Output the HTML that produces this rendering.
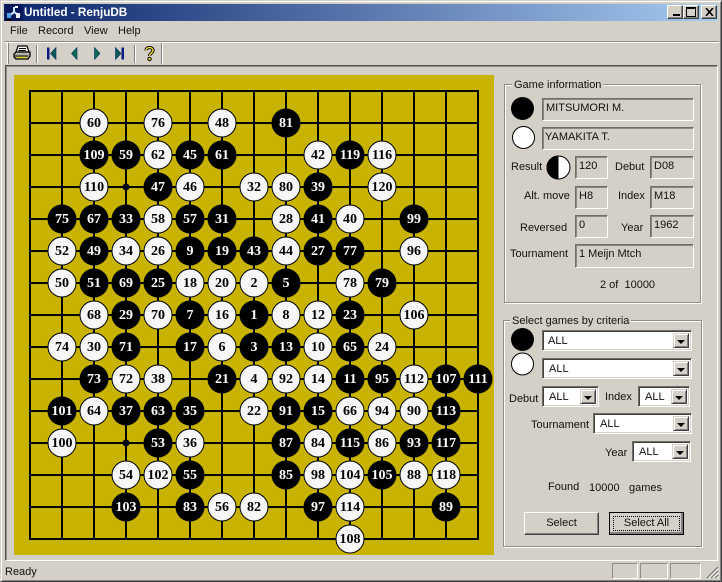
<!DOCTYPE html>
<html><head><meta charset="utf-8"><title>RenjuDB</title>
<style>
html,body{margin:0;padding:0;background:#d4d0c8;}
#w{position:relative;width:722px;height:582px;overflow:hidden;background:#d4d0c8;font:11px "Liberation Sans",sans-serif;color:#000;}
.a{position:absolute;box-sizing:border-box;}
.t{position:absolute;white-space:nowrap;line-height:14px;color:#111;}
.f{position:absolute;box-sizing:border-box;border:1px solid;border-color:#716f64 #fff #fff #716f64;box-shadow:inset 1px 1px 0 #8a887f;padding:2px 0 0 3px;line-height:14px;white-space:nowrap;color:#111;}
.g{position:absolute;box-sizing:border-box;border:1px solid #8f8d85;box-shadow:1px 1px 0 #fff,inset 1px 1px 0 #fff;}
.gl{position:absolute;background:#d4d0c8;padding:0 2px;line-height:13px;white-space:nowrap;color:#111;}
.c{position:absolute;box-sizing:border-box;background:#fff;border:1px solid;border-color:#716f64 #fff #fff #716f64;box-shadow:inset 1px 1px 0 #404040,inset -1px -1px 0 #d4d0c8;line-height:14px;padding:3px 0 0 5px;color:#111;}
.c i{position:absolute;top:2px;right:2px;bottom:2px;width:16px;background:#d4d0c8;border:1px solid;border-color:#d4d0c8 #404040 #404040 #d4d0c8;box-shadow:inset 1px 1px 0 #fff,inset -1px -1px 0 #808080;box-sizing:border-box;}
.c i:after{content:"";position:absolute;left:3px;top:6px;border:4px solid transparent;border-top:4px solid #000;border-bottom:0;}
.b{position:absolute;box-sizing:border-box;background:#d4d0c8;text-align:center;line-height:21px;color:#111;border:1px solid;border-color:#fff #404040 #404040 #fff;box-shadow:inset -1px -1px 0 #808080;}
.wb{position:absolute;top:5px;width:16px;height:14px;box-sizing:border-box;background:#d4d0c8;border:1px solid;border-color:#fff #404040 #404040 #fff;box-shadow:inset -1px -1px 0 #808080;}
.p{position:absolute;top:563px;height:16px;box-sizing:border-box;border:1px solid;border-color:#8f8d85 #fff #fff #8f8d85;}
#bd circle.k{fill:#000;}
#bd circle.o{fill:#f6f6f6;stroke:#000;stroke-width:1;}
#bd text{font:bold 14px "Liberation Serif",serif;text-anchor:middle;}
#bd text.n{fill:#fff;}
#bd text.m{fill:#000;}
</style></head><body>
<div id="w">
<!-- window edges -->
<div class="a" style="left:0;top:0;width:722px;height:582px;border:1px solid;border-color:#d4d0c8 #404040 #404040 #d4d0c8;box-shadow:inset 1px 1px 0 #fff,inset -1px -1px 0 #808080;"></div>
<!-- title -->
<div class="a" style="left:4px;top:4px;width:714px;height:17px;background:linear-gradient(90deg,#0a246a,#a6caf0);"></div>
<svg class="a" style="left:5px;top:4px" width="18" height="17" viewBox="0 0 18 17"><rect width="18" height="17" fill="#06175a"/><path d="M9 3 L9 8 M3 13 L9 8 L15 12" stroke="#cfe4ff" stroke-width="2" fill="none"/><rect x="10" y="2" width="3" height="2" fill="#fff"/><rect x="2" y="9" width="4" height="5" fill="#4aa0e0"/><rect x="11" y="9" width="4" height="5" fill="#e8f2ff"/><rect x="1" y="15" width="5" height="2" fill="#000"/></svg>
<div class="t" style="left:24px;top:5px;color:#fff;font:bold 11.700px/15px 'Liberation Sans',sans-serif;">Untitled - RenjuDB</div>
<div class="wb" style="left:667px"><div class="a" style="left:5px;top:8px;width:7px;height:2px;background:#000"></div></div>
<div class="wb" style="left:683px"><div class="a" style="left:2px;top:1px;width:10px;height:10px;border:1px solid #000;border-top-width:2px"></div></div>
<div class="wb" style="left:701px"><svg class="a" style="left:3px;top:2px" width="9" height="8" viewBox="0 0 9 8"><path d="M1 0 L8 8 M8 0 L1 8" stroke="#000" stroke-width="1.700"/></svg></div>
<!-- menu -->
<div class="t" style="left:10px;top:24px">File</div>
<div class="t" style="left:38px;top:24px">Record</div>
<div class="t" style="left:84px;top:24px">View</div>
<div class="t" style="left:118px;top:24px">Help</div>
<div class="a" style="left:4px;top:41px;width:715px;height:2px;background:linear-gradient(#8f8d85 50%,#fff 50%);"></div>
<!-- toolbar -->
<div class="a" style="left:7px;top:43px;width:2px;height:21px;background:#fff;border-right:1px solid #808080"></div>
<div class="a" style="left:36px;top:45px;width:2px;height:18px;background:linear-gradient(90deg,#808080 50%,#fff 50%)"></div>
<div class="a" style="left:134px;top:45px;width:2px;height:18px;background:linear-gradient(90deg,#808080 50%,#fff 50%)"></div>
<div class="a" style="left:161px;top:43px;width:2px;height:21px;background:linear-gradient(90deg,#808080 50%,#fff 50%)"></div>
<svg class="a" style="left:12px;top:44px" width="20" height="18" viewBox="0 0 20 18"><path d="M6 2 H15 L17 8 H4 Z" fill="#fff" stroke="#000" stroke-width="1.200"/><path d="M7 4.500 H14 M6.500 6.500 H14" stroke="#000"/><path d="M4 8 H18 V12 L16 15 H4 L2 13 V10 Z" fill="#b5b2a8" stroke="#000" stroke-width="1.300"/><path d="M3 12 H16" stroke="#000"/><path d="M5 13.500 H15" stroke="#d8d020" stroke-width="1.500"/></svg>
<svg class="a" style="left:45px;top:46px" width="85" height="16" viewBox="0 0 85 16"><rect x="2" y="1.500" width="2.500" height="12" fill="#0a1a80"/><path d="M11 1.500 V13.500 L5.500 7.500 Z" fill="#0a5a50" stroke="#06306a" stroke-width=".6"/><path d="M32 1.500 V13.500 L26.500 7.500 Z" fill="#0a6a50" stroke="#06306a" stroke-width=".6"/><path d="M49.500 1.500 V13.500 L55 7.500 Z" fill="#0a6a50" stroke="#06306a" stroke-width=".6"/><path d="M70.500 1.500 V13.500 L76 7.500 Z" fill="#0a5a50" stroke="#06306a" stroke-width=".6"/><rect x="76.500" y="1.500" width="2.500" height="12" fill="#0a1a80"/></svg>
<svg class="a" style="left:144px;top:46px" width="11" height="16" viewBox="0 0 11 16"><path d="M2 4.500 C2 0.500 9 0.500 9 4.500 C9 7 5.500 7 5.500 10" fill="none" stroke="#000" stroke-width="3.200"/><path d="M2 4.500 C2 0.500 9 0.500 9 4.500 C9 7 5.500 7 5.500 10" fill="none" stroke="#f0e030" stroke-width="1.400"/><circle cx="5.500" cy="13" r="1.700" fill="#f0e030" stroke="#000"/></svg>
<!-- view frame -->
<div class="a" style="left:5px;top:65px;width:713px;height:496px;border:1px solid;border-color:#55534c #fff #fff #55534c;box-shadow:inset 1px 1px 0 #8f8d85;"></div>
<!-- board -->
<svg id="bd" class="a" style="left:14px;top:75px" width="480" height="480" viewBox="14 75 480 480">
<rect x="14" y="75" width="480" height="480" fill="#c8b400"/>
<path d="M30 91H478M30 123H478M30 155H478M30 187H478M30 219H478M30 251H478M30 283H478M30 315H478M30 347H478M30 379H478M30 411H478M30 443H478M30 475H478M30 507H478M30 539H478M30 91V539M62 91V539M94 91V539M126 91V539M158 91V539M190 91V539M222 91V539M254 91V539M286 91V539M318 91V539M350 91V539M382 91V539M414 91V539M446 91V539M478 91V539" stroke="#000" stroke-width="2" fill="none" stroke-linecap="square"/>
<circle cx="126" cy="187" r="3.500" fill="#000"/><circle cx="126" cy="443" r="3.500" fill="#000"/>
<circle class="o" cx="94" cy="123" r="14"/><text class="m" x="94" y="127">60</text>
<circle class="o" cx="158" cy="123" r="14"/><text class="m" x="158" y="127">76</text>
<circle class="o" cx="222" cy="123" r="14"/><text class="m" x="222" y="127">48</text>
<circle class="k" cx="286" cy="123" r="14.500"/><text class="n" x="286" y="127">81</text>
<circle class="k" cx="94" cy="155" r="14.500"/><text class="n" x="94" y="159">109</text>
<circle class="k" cx="126" cy="155" r="14.500"/><text class="n" x="126" y="159">59</text>
<circle class="o" cx="158" cy="155" r="14"/><text class="m" x="158" y="159">62</text>
<circle class="k" cx="190" cy="155" r="14.500"/><text class="n" x="190" y="159">45</text>
<circle class="k" cx="222" cy="155" r="14.500"/><text class="n" x="222" y="159">61</text>
<circle class="o" cx="318" cy="155" r="14"/><text class="m" x="318" y="159">42</text>
<circle class="k" cx="350" cy="155" r="14.500"/><text class="n" x="350" y="159">119</text>
<circle class="o" cx="382" cy="155" r="14"/><text class="m" x="382" y="159">116</text>
<circle class="o" cx="94" cy="187" r="14"/><text class="m" x="94" y="191">110</text>
<circle class="k" cx="158" cy="187" r="14.500"/><text class="n" x="158" y="191">47</text>
<circle class="o" cx="190" cy="187" r="14"/><text class="m" x="190" y="191">46</text>
<circle class="o" cx="254" cy="187" r="14"/><text class="m" x="254" y="191">32</text>
<circle class="o" cx="286" cy="187" r="14"/><text class="m" x="286" y="191">80</text>
<circle class="k" cx="318" cy="187" r="14.500"/><text class="n" x="318" y="191">39</text>
<circle class="o" cx="382" cy="187" r="14"/><text class="m" x="382" y="191">120</text>
<circle class="k" cx="62" cy="219" r="14.500"/><text class="n" x="62" y="223">75</text>
<circle class="k" cx="94" cy="219" r="14.500"/><text class="n" x="94" y="223">67</text>
<circle class="k" cx="126" cy="219" r="14.500"/><text class="n" x="126" y="223">33</text>
<circle class="o" cx="158" cy="219" r="14"/><text class="m" x="158" y="223">58</text>
<circle class="k" cx="190" cy="219" r="14.500"/><text class="n" x="190" y="223">57</text>
<circle class="k" cx="222" cy="219" r="14.500"/><text class="n" x="222" y="223">31</text>
<circle class="o" cx="286" cy="219" r="14"/><text class="m" x="286" y="223">28</text>
<circle class="k" cx="318" cy="219" r="14.500"/><text class="n" x="318" y="223">41</text>
<circle class="o" cx="350" cy="219" r="14"/><text class="m" x="350" y="223">40</text>
<circle class="k" cx="414" cy="219" r="14.500"/><text class="n" x="414" y="223">99</text>
<circle class="o" cx="62" cy="251" r="14"/><text class="m" x="62" y="255">52</text>
<circle class="k" cx="94" cy="251" r="14.500"/><text class="n" x="94" y="255">49</text>
<circle class="o" cx="126" cy="251" r="14"/><text class="m" x="126" y="255">34</text>
<circle class="o" cx="158" cy="251" r="14"/><text class="m" x="158" y="255">26</text>
<circle class="k" cx="190" cy="251" r="14.500"/><text class="n" x="190" y="255">9</text>
<circle class="k" cx="222" cy="251" r="14.500"/><text class="n" x="222" y="255">19</text>
<circle class="k" cx="254" cy="251" r="14.500"/><text class="n" x="254" y="255">43</text>
<circle class="o" cx="286" cy="251" r="14"/><text class="m" x="286" y="255">44</text>
<circle class="k" cx="318" cy="251" r="14.500"/><text class="n" x="318" y="255">27</text>
<circle class="k" cx="350" cy="251" r="14.500"/><text class="n" x="350" y="255">77</text>
<circle class="o" cx="414" cy="251" r="14"/><text class="m" x="414" y="255">96</text>
<circle class="o" cx="62" cy="283" r="14"/><text class="m" x="62" y="287">50</text>
<circle class="k" cx="94" cy="283" r="14.500"/><text class="n" x="94" y="287">51</text>
<circle class="k" cx="126" cy="283" r="14.500"/><text class="n" x="126" y="287">69</text>
<circle class="k" cx="158" cy="283" r="14.500"/><text class="n" x="158" y="287">25</text>
<circle class="o" cx="190" cy="283" r="14"/><text class="m" x="190" y="287">18</text>
<circle class="o" cx="222" cy="283" r="14"/><text class="m" x="222" y="287">20</text>
<circle class="o" cx="254" cy="283" r="14"/><text class="m" x="254" y="287">2</text>
<circle class="k" cx="286" cy="283" r="14.500"/><text class="n" x="286" y="287">5</text>
<circle class="o" cx="350" cy="283" r="14"/><text class="m" x="350" y="287">78</text>
<circle class="k" cx="382" cy="283" r="14.500"/><text class="n" x="382" y="287">79</text>
<circle class="o" cx="94" cy="315" r="14"/><text class="m" x="94" y="319">68</text>
<circle class="k" cx="126" cy="315" r="14.500"/><text class="n" x="126" y="319">29</text>
<circle class="o" cx="158" cy="315" r="14"/><text class="m" x="158" y="319">70</text>
<circle class="k" cx="190" cy="315" r="14.500"/><text class="n" x="190" y="319">7</text>
<circle class="o" cx="222" cy="315" r="14"/><text class="m" x="222" y="319">16</text>
<circle class="k" cx="254" cy="315" r="14.500"/><text class="n" x="254" y="319">1</text>
<circle class="o" cx="286" cy="315" r="14"/><text class="m" x="286" y="319">8</text>
<circle class="o" cx="318" cy="315" r="14"/><text class="m" x="318" y="319">12</text>
<circle class="k" cx="350" cy="315" r="14.500"/><text class="n" x="350" y="319">23</text>
<circle class="o" cx="414" cy="315" r="14"/><text class="m" x="414" y="319">106</text>
<circle class="o" cx="62" cy="347" r="14"/><text class="m" x="62" y="351">74</text>
<circle class="o" cx="94" cy="347" r="14"/><text class="m" x="94" y="351">30</text>
<circle class="k" cx="126" cy="347" r="14.500"/><text class="n" x="126" y="351">71</text>
<circle class="k" cx="190" cy="347" r="14.500"/><text class="n" x="190" y="351">17</text>
<circle class="o" cx="222" cy="347" r="14"/><text class="m" x="222" y="351">6</text>
<circle class="k" cx="254" cy="347" r="14.500"/><text class="n" x="254" y="351">3</text>
<circle class="k" cx="286" cy="347" r="14.500"/><text class="n" x="286" y="351">13</text>
<circle class="o" cx="318" cy="347" r="14"/><text class="m" x="318" y="351">10</text>
<circle class="k" cx="350" cy="347" r="14.500"/><text class="n" x="350" y="351">65</text>
<circle class="o" cx="382" cy="347" r="14"/><text class="m" x="382" y="351">24</text>
<circle class="k" cx="94" cy="379" r="14.500"/><text class="n" x="94" y="383">73</text>
<circle class="o" cx="126" cy="379" r="14"/><text class="m" x="126" y="383">72</text>
<circle class="o" cx="158" cy="379" r="14"/><text class="m" x="158" y="383">38</text>
<circle class="k" cx="222" cy="379" r="14.500"/><text class="n" x="222" y="383">21</text>
<circle class="o" cx="254" cy="379" r="14"/><text class="m" x="254" y="383">4</text>
<circle class="o" cx="286" cy="379" r="14"/><text class="m" x="286" y="383">92</text>
<circle class="o" cx="318" cy="379" r="14"/><text class="m" x="318" y="383">14</text>
<circle class="k" cx="350" cy="379" r="14.500"/><text class="n" x="350" y="383">11</text>
<circle class="k" cx="382" cy="379" r="14.500"/><text class="n" x="382" y="383">95</text>
<circle class="o" cx="414" cy="379" r="14"/><text class="m" x="414" y="383">112</text>
<circle class="k" cx="446" cy="379" r="14.500"/><text class="n" x="446" y="383">107</text>
<circle class="k" cx="478" cy="379" r="14.500"/><text class="n" x="478" y="383">111</text>
<circle class="k" cx="62" cy="411" r="14.500"/><text class="n" x="62" y="415">101</text>
<circle class="o" cx="94" cy="411" r="14"/><text class="m" x="94" y="415">64</text>
<circle class="k" cx="126" cy="411" r="14.500"/><text class="n" x="126" y="415">37</text>
<circle class="k" cx="158" cy="411" r="14.500"/><text class="n" x="158" y="415">63</text>
<circle class="k" cx="190" cy="411" r="14.500"/><text class="n" x="190" y="415">35</text>
<circle class="o" cx="254" cy="411" r="14"/><text class="m" x="254" y="415">22</text>
<circle class="k" cx="286" cy="411" r="14.500"/><text class="n" x="286" y="415">91</text>
<circle class="k" cx="318" cy="411" r="14.500"/><text class="n" x="318" y="415">15</text>
<circle class="o" cx="350" cy="411" r="14"/><text class="m" x="350" y="415">66</text>
<circle class="o" cx="382" cy="411" r="14"/><text class="m" x="382" y="415">94</text>
<circle class="o" cx="414" cy="411" r="14"/><text class="m" x="414" y="415">90</text>
<circle class="k" cx="446" cy="411" r="14.500"/><text class="n" x="446" y="415">113</text>
<circle class="o" cx="62" cy="443" r="14"/><text class="m" x="62" y="447">100</text>
<circle class="k" cx="158" cy="443" r="14.500"/><text class="n" x="158" y="447">53</text>
<circle class="o" cx="190" cy="443" r="14"/><text class="m" x="190" y="447">36</text>
<circle class="k" cx="286" cy="443" r="14.500"/><text class="n" x="286" y="447">87</text>
<circle class="o" cx="318" cy="443" r="14"/><text class="m" x="318" y="447">84</text>
<circle class="k" cx="350" cy="443" r="14.500"/><text class="n" x="350" y="447">115</text>
<circle class="o" cx="382" cy="443" r="14"/><text class="m" x="382" y="447">86</text>
<circle class="k" cx="414" cy="443" r="14.500"/><text class="n" x="414" y="447">93</text>
<circle class="k" cx="446" cy="443" r="14.500"/><text class="n" x="446" y="447">117</text>
<circle class="o" cx="126" cy="475" r="14"/><text class="m" x="126" y="479">54</text>
<circle class="o" cx="158" cy="475" r="14"/><text class="m" x="158" y="479">102</text>
<circle class="k" cx="190" cy="475" r="14.500"/><text class="n" x="190" y="479">55</text>
<circle class="k" cx="286" cy="475" r="14.500"/><text class="n" x="286" y="479">85</text>
<circle class="o" cx="318" cy="475" r="14"/><text class="m" x="318" y="479">98</text>
<circle class="o" cx="350" cy="475" r="14"/><text class="m" x="350" y="479">104</text>
<circle class="k" cx="382" cy="475" r="14.500"/><text class="n" x="382" y="479">105</text>
<circle class="o" cx="414" cy="475" r="14"/><text class="m" x="414" y="479">88</text>
<circle class="o" cx="446" cy="475" r="14"/><text class="m" x="446" y="479">118</text>
<circle class="k" cx="126" cy="507" r="14.500"/><text class="n" x="126" y="511">103</text>
<circle class="k" cx="190" cy="507" r="14.500"/><text class="n" x="190" y="511">83</text>
<circle class="o" cx="222" cy="507" r="14"/><text class="m" x="222" y="511">56</text>
<circle class="o" cx="254" cy="507" r="14"/><text class="m" x="254" y="511">82</text>
<circle class="k" cx="318" cy="507" r="14.500"/><text class="n" x="318" y="511">97</text>
<circle class="o" cx="350" cy="507" r="14"/><text class="m" x="350" y="511">114</text>
<circle class="k" cx="446" cy="507" r="14.500"/><text class="n" x="446" y="511">89</text>
<circle class="o" cx="350" cy="539" r="14"/><text class="m" x="350" y="543">108</text>
</svg>
<!-- game info -->
<div class="g" style="left:504px;top:84px;width:197px;height:219px"></div>
<div class="gl" style="left:512px;top:79px">Game information</div>
<svg class="a" style="left:505px;top:92px" width="70" height="92" viewBox="505 92 70 92"><circle cx="522.500" cy="108.500" r="11.500" fill="#000"/><circle cx="523.500" cy="137.500" r="11" fill="#fff" stroke="#000"/><circle cx="558.500" cy="167.500" r="11.500" fill="#fff" stroke="#000"/><path d="M558.500 155.500 A12 12 0 0 0 558.500 179.500 Z" fill="#000"/></svg>
<div class="f" style="left:542px;top:98px;width:152px;height:23px">MITSUMORI M.</div>
<div class="f" style="left:542px;top:127px;width:152px;height:23px;padding-left:2px">YAMAKITA T.</div>
<div class="t" style="left:511px;top:160px">Result</div>
<div class="f" style="left:575px;top:156px;width:33px;height:23px">120</div>
<div class="t" style="left:615px;top:160px">Debut</div>
<div class="f" style="left:650px;top:156px;width:44px;height:23px">D08</div>
<div class="t" style="left:524px;top:189px">Alt. move</div>
<div class="f" style="left:575px;top:186px;width:33px;height:23px">H8</div>
<div class="t" style="left:618px;top:189px">Index</div>
<div class="f" style="left:650px;top:186px;width:44px;height:23px">M18</div>
<div class="t" style="left:520px;top:221px">Reversed</div>
<div class="f" style="left:575px;top:215px;width:33px;height:23px">0</div>
<div class="t" style="left:621px;top:221px">Year</div>
<div class="f" style="left:650px;top:215px;width:44px;height:23px">1962</div>
<div class="t" style="left:510px;top:247px">Tournament</div>
<div class="f" style="left:575px;top:244px;width:119px;height:24px">1 Meijn Mtch</div>
<div class="t" style="left:600px;top:278px">2 of &nbsp;10000</div>
<!-- select -->
<div class="g" style="left:503px;top:320px;width:199px;height:227px"></div>
<div class="gl" style="left:510px;top:315px">Select games by criteria</div>
<svg class="a" style="left:505px;top:325px" width="36" height="56" viewBox="505 325 36 56"><circle cx="522.500" cy="339.500" r="11.500" fill="#000"/><circle cx="522.500" cy="364" r="11" fill="#fff" stroke="#000"/></svg>
<div class="c" style="left:542px;top:330px;width:150px;height:21px">ALL<i></i></div>
<div class="c" style="left:542px;top:358px;width:150px;height:21px;padding-left:6px">ALL<i></i></div>
<div class="t" style="left:509px;top:392px">Debut</div>
<div class="c" style="left:542px;top:386px;width:57px;height:21px;padding-left:6px">ALL<i></i></div>
<div class="t" style="left:605px;top:390px">Index</div>
<div class="c" style="left:638px;top:386px;width:52px;height:21px;padding-left:6px">ALL<i></i></div>
<div class="t" style="left:531px;top:418px">Tournament</div>
<div class="c" style="left:593px;top:413px;width:99px;height:21px;padding-left:6px">ALL<i></i></div>
<div class="t" style="left:605px;top:446px">Year</div>
<div class="c" style="left:632px;top:441px;width:59px;height:21px;padding-left:6px">ALL<i></i></div>
<div class="t" style="left:548px;top:480px">Found</div>
<div class="t" style="left:589px;top:481px">10000</div>
<div class="t" style="left:629px;top:481px">games</div>
<div class="b" style="left:524px;top:512px;width:75px;height:23px">Select</div>
<div class="b" style="left:609px;top:512px;width:75px;height:23px;outline:1px solid #000;outline-offset:-1px;box-shadow:inset -2px -2px 0 #808080">Select All</div>
<div class="a" style="left:613px;top:516px;width:67px;height:15px;border:1px dotted #000"></div>
<!-- status -->
<div class="t" style="left:5px;top:565px">Ready</div>
<div class="p" style="left:612px;width:26px"></div>
<div class="p" style="left:640px;width:28px"></div>
<div class="p" style="left:670px;width:31px"></div>
<svg class="a" style="left:705px;top:565px" width="14" height="14" viewBox="0 0 14 14"><path d="M13 2 L2 13 M13 6 L6 13 M13 10 L10 13" stroke="#808080" stroke-width="1.500"/><path d="M13 4 L4 13 M13 8 L8 13 M13 12 L12 13" stroke="#fff"/></svg>
</div>
</body></html>
